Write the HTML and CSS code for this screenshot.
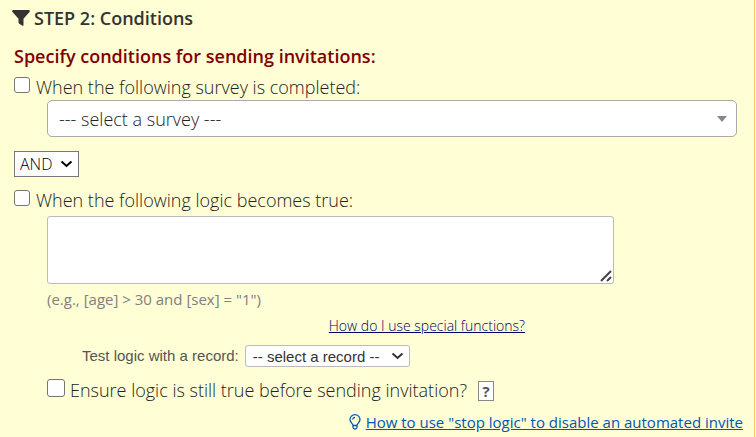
FILE: index.html
```html
<!DOCTYPE html>
<html lang="en">
  <head>
    <meta charset="UTF-8">
    <meta name="viewport" content="width=device-width, initial-scale=1.0">
    <title>Conditions</title>
    <link rel="stylesheet" href="styles.css">
  </head>
  <body>
    <form class="step">
      <h1 class="step-title">
        <svg class="icon-filter" viewBox="0 0 18 16" aria-hidden="true">
          <path d="M1 0H17Q18.500 .6 17.500 2L11.500 8.800V15Q11.200 16.300 10 15.600L7 13.500Q6.500 13 6.500 12.500V8.800L.5 2Q-.5 .6 1 0Z"/>
        </svg>
        STEP 2: Conditions
      </h1>
      <h2 class="step-heading">Specify conditions for sending invitations:</h2>

      <div class="check-row">
        <input id="survey-check" type="checkbox">
        <label for="survey-check">When the following survey is completed:</label>
      </div>
      <div class="indent select-wrap">
        <select id="survey" class="survey-select" aria-label="Survey">
          <option>--- select a survey ---</option>
        </select>
        <svg class="icon-caret" viewBox="0 0 10 6" aria-hidden="true"><path d="M0 0H10L5 6Z"/></svg>
      </div>

      <div class="and-row">
        <select class="and-select" aria-label="Operator">
          <option>AND</option>
          <option>OR</option>
        </select>
        <svg class="icon-chevron" viewBox="0 0 12 8" aria-hidden="true"><path d="M1 1.500L6 6L11 1.500"/></svg>
      </div>

      <div class="check-row">
        <input id="logic-check" type="checkbox">
        <label for="logic-check">When the following logic becomes true:</label>
      </div>
      <div class="indent logic">
        <div class="logic-box">
          <textarea class="logic-text" aria-label="Logic"></textarea>
          <svg class="icon-grip" viewBox="0 0 12 12" aria-hidden="true"><path d="M1 11L11 1M7 11L11 7"/></svg>
        </div>
        <div class="logic-hint">(e.g., [age] &gt; 30 and [sex] = "1")</div>
        <a class="functions-link" href="#">How do I use special functions?</a>
      </div>

      <div class="test-row">
        <label for="record">Test logic with a record:</label>
        <div class="record-wrap">
          <select id="record" class="record-select">
            <option>-- select a record --</option>
          </select>
          <svg class="icon-chevron" viewBox="0 0 12 8" aria-hidden="true"><path d="M1 1.500L6 6L11 1.500"/></svg>
        </div>
      </div>

      <div class="indent ensure-row">
        <input id="ensure-check" type="checkbox">
        <label for="ensure-check">Ensure logic is still true before sending invitation?</label>
        <button class="help" type="button">?</button>
      </div>

      <div class="stop-row">
        <svg class="icon-bulb" viewBox="0 0 12 16" aria-hidden="true">
          <path d="M4 11.500C4 9.500 1 8.500 1 5.500A5 4.800 0 0 1 11 5.500C11 8.500 8 9.500 8 11.500ZM4 11.500V13.500Q4.200 15 6 15T8 13.500V11.500M3.600 5.500Q3.800 3.500 6 3.300"/>
        </svg>
        <a href="#">How to use "stop logic" to disable an automated invite</a>
      </div>
    </form>
  </body>
</html>
```

FILE: styles.css
```css
* {
  box-sizing: border-box;
}
body {
  margin: 0;
  background: #fffed4;
  color: #222;
  font-family: "Open Sans", "Noto Sans", sans-serif;
  font-size: 18px;
  font-weight: 300;
  line-height: 24px;
}
.step {
  min-height: 100vh;
  margin-right: 1px;
  padding: 6px 17px 0 14px;
  border-right: 1px solid #ffc869;
}
select, textarea, button {
  margin: 0;
  color: inherit;
  font-family: inherit;
  font-weight: inherit;
}
select {
  display: block;
  appearance: none;
  background: #fff;
}
svg {
  flex: none;
}
input[type="checkbox"] {
  appearance: none;
  width: 16px;
  height: 16px;
  margin: 0;
  background: #fff;
  border: 1px solid #767676;
  border-radius: 3px;
}
input[type="checkbox"]:checked {
  background: #0075ff;
}
.step-title, .step-heading {
  margin: 0;
  font-size: 18px;
  font-weight: 600;
}
.step-title {
  display: flex;
  align-items: center;
  gap: 4px;
  margin: 0 0 14px -2px;
  color: #333;
}
.icon-filter {
  width: 18px;
  height: 16px;
  fill: #333;
}
.step-heading {
  margin-bottom: 9px;
  color: #800000;
}
.check-row {
  display: flex;
  gap: 6px;
  align-items: flex-start;
}
.check-row label {
  padding-bottom: 2px;
  line-height: 21px;
}
.indent {
  margin-left: 33px;
}
.select-wrap, .record-wrap, .and-row, .logic-box {
  position: relative;
}
.survey-select {
  width: 100%;
  height: 37px;
  padding: 0 11px;
  border: 1px solid #aaa;
  border-radius: 5px;
  font-size: 18px;
}
.icon-caret {
  position: absolute;
  top: 16px;
  right: 10px;
  width: 10px;
  height: 6px;
  fill: #888;
  pointer-events: none;
}
.icon-chevron {
  position: absolute;
  top: 9px;
  right: 6px;
  width: 13px;
  height: 8px;
  fill: none;
  stroke: currentColor;
  stroke-width: 2;
  pointer-events: none;
}
.and-row {
  width: 65px;
  margin: 14px 0 13px;
  color: #000;
}
.and-select {
  width: 100%;
  height: 26px;
  padding: 0 5px;
  border: 1px solid #767676;
  font-size: 16px;
}
.logic {
  max-width: 567px;
  margin-top: 3px;
}
.logic-box {
  height: 68px;
}
.logic-text {
  display: block;
  width: 100%;
  height: 100%;
  border: 1px solid #bbb;
  border-radius: 3px;
  resize: none;
}
.icon-grip {
  position: absolute;
  right: 2px;
  bottom: 2px;
  width: 12px;
  height: 12px;
  stroke: #444;
  stroke-width: 2;
  pointer-events: none;
}
.logic-hint {
  padding-top: 3px;
  color: #808080;
  font-size: 15px;
  font-weight: 400;
}
.functions-link {
  display: block;
  width: fit-content;
  margin: 3px 89px 0 auto;
  color: #000066;
  font-size: 14px;
}
.test-row {
  display: flex;
  align-items: center;
  gap: 6px;
  margin: 7px 0 12px 68px;
  color: #555;
  font-family: "Liberation Sans", Arial, sans-serif;
  font-size: 15px;
  line-height: 22px;
}
.record-wrap {
  width: 165px;
  color: #333;
}
.record-select {
  width: 100%;
  height: 22px;
  padding: 0 7px;
  border: 1px solid #bbb;
  border-radius: 3px;
  font-size: 15px;
}
.record-wrap .icon-chevron {
  top: 7px;
}
.ensure-row {
  display: flex;
  align-items: flex-start;
  gap: 5px;
}
.ensure-row label {
  padding-bottom: 2px;
  line-height: 22px;
}
.ensure-row input[type="checkbox"] {
  width: 18px;
  height: 18px;
}
.help {
  width: 16px;
  height: 20px;
  margin: 2px 0 0 6px;
  padding: 0;
  background: #fff;
  border: 1px solid #888;
  color: #555;
  font-size: 15px;
  font-weight: 700;
  line-height: 18px;
}
.stop-row {
  display: flex;
  align-items: center;
  justify-content: flex-end;
  gap: 5px;
  margin: 7px -6px 0 0;
  font-size: 15px;
  font-weight: 400;
}
.stop-row a {
  color: #0056b3;
}
.icon-bulb {
  width: 12px;
  height: 16px;
  fill: none;
  stroke: #0056b3;
  stroke-width: 1.3;
}
```
